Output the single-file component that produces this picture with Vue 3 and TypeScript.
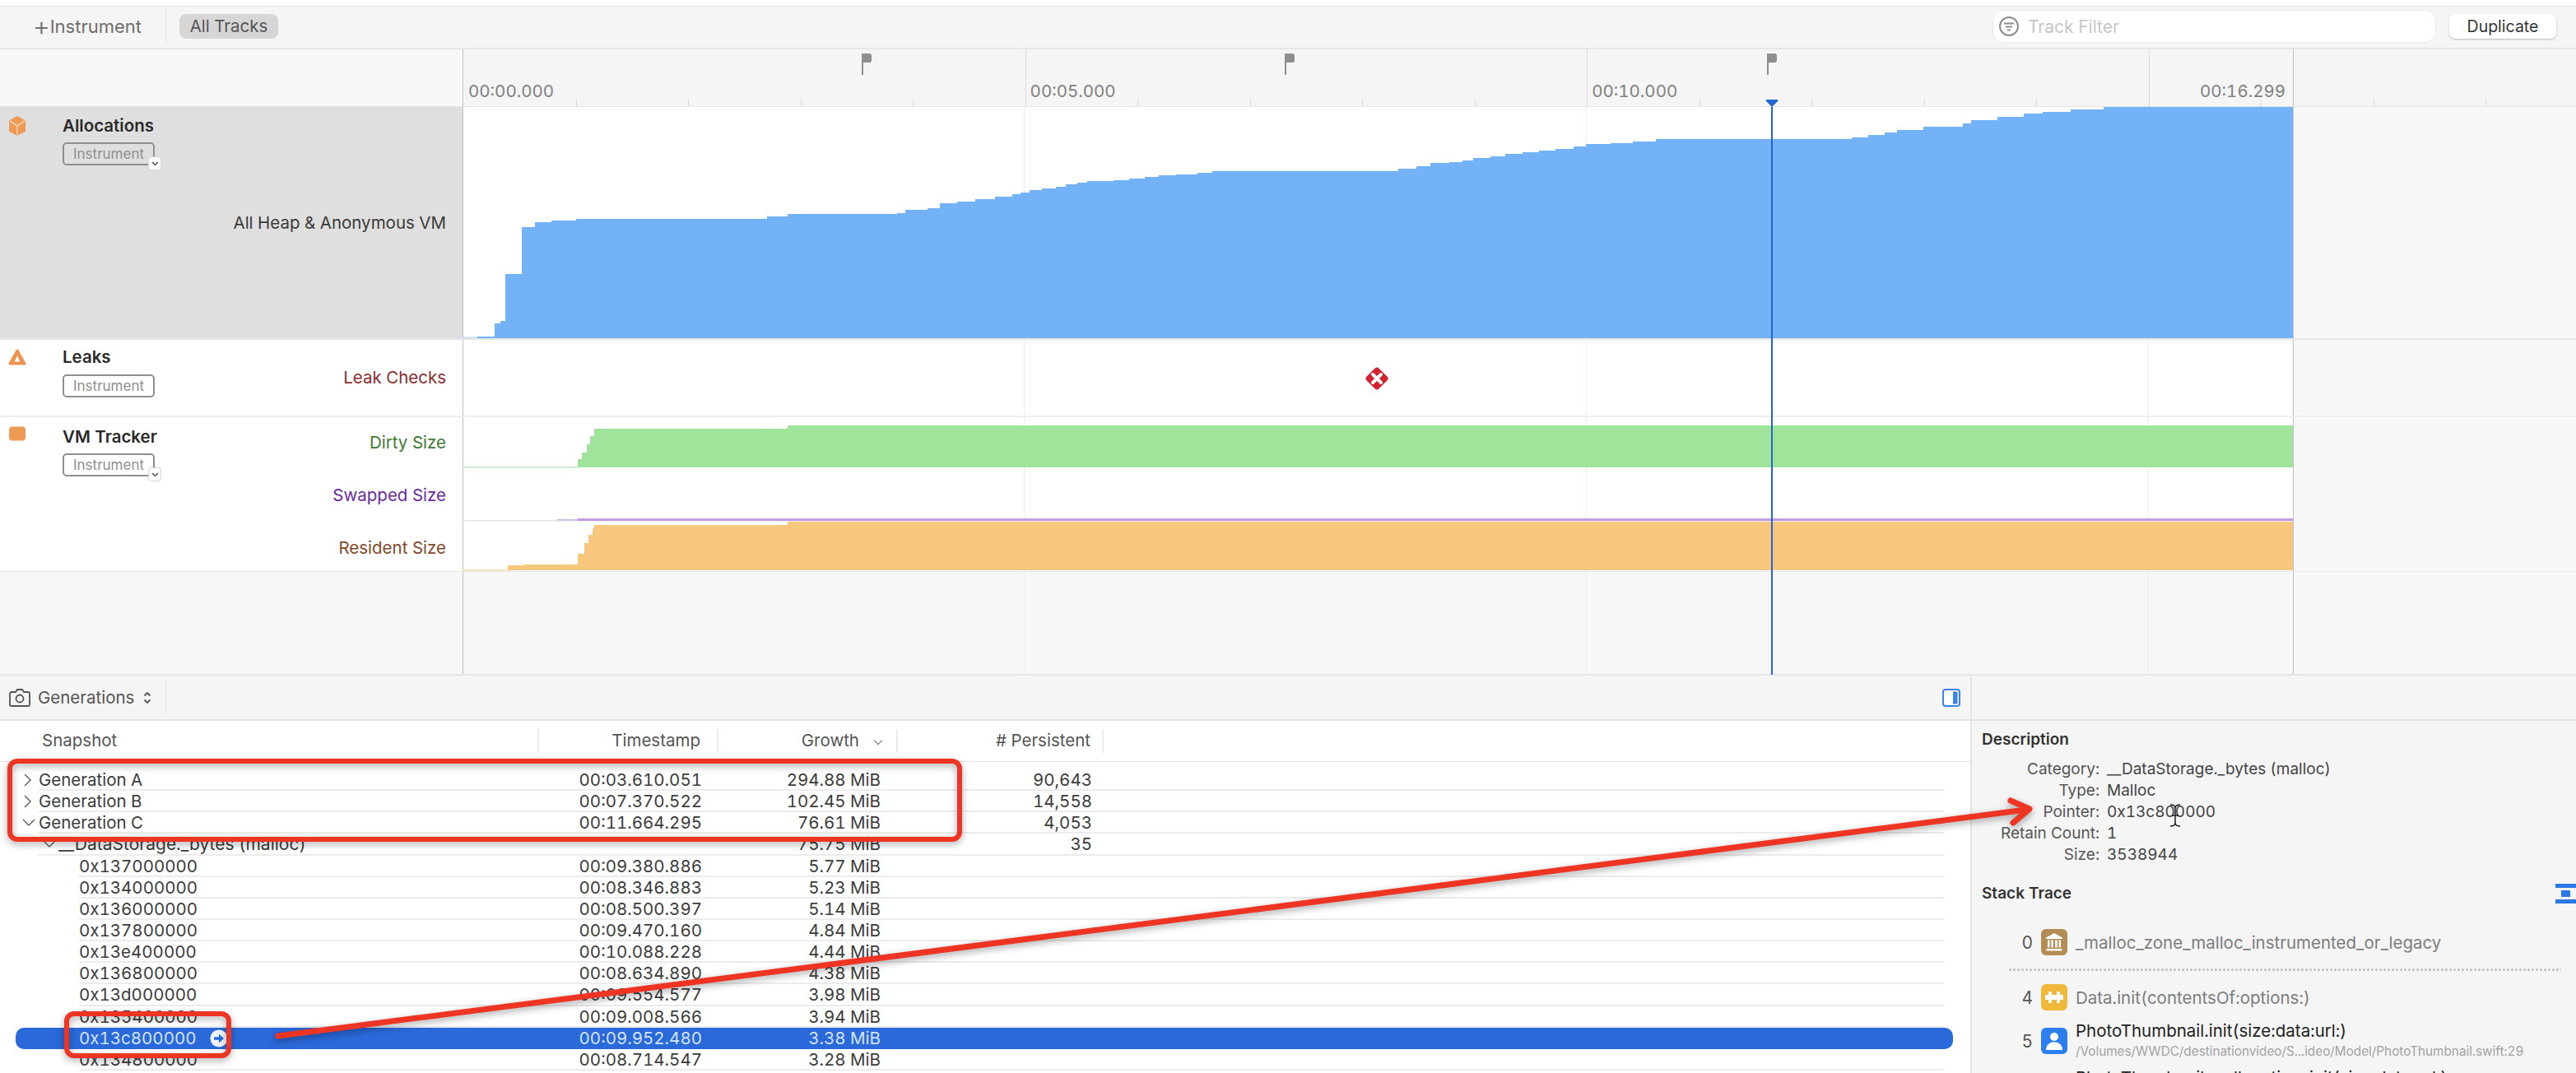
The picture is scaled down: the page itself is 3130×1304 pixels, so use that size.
<script setup lang="ts">
import { computed } from 'vue'

type Point = [number, number]

interface SnapshotRow {
  name: string
  level: 0 | 1 | 2
  open?: boolean
  time?: string
  growth: string
  persistent?: string
  selected?: boolean
}

const plotLeft = 562
const plotRight = 2786
const majorStep = 682.6
const minorStep = majorStep / 5

const majorX = [1, 2, 3].map((n) => plotLeft + n * majorStep)
const minorX = computed(() => {
  const xs: number[] = []
  for (let i = 1; i < 19; i++) {
    if (i % 5 !== 0) xs.push(plotLeft + i * minorStep)
  }
  return xs
})

const rulerLabels = [
  { text: '00:00.000', left: plotLeft + 6 },
  { text: '00:05.000', left: plotLeft + majorStep + 6 },
  { text: '00:10.000', left: plotLeft + 2 * majorStep + 6 },
  { text: '00:16.299', left: 2672 },
]
const flags = [1046, 1560, 2146]

// traced from the recording, x and y are page pixels
const heapSteps: Point[] = [
  [580, 409], [601, 393], [608, 390], [614, 333], [634, 276], [650, 270], [670, 268], [700, 266],
  [932, 263], [957, 260], [1090, 259], [1100, 255], [1127, 253], [1142, 247], [1163, 245], [1185, 242],
  [1209, 239], [1230, 236], [1240, 234], [1251, 231], [1266, 229], [1283, 227], [1295, 224], [1309, 222],
  [1321, 220], [1353, 219], [1372, 217], [1391, 215], [1408, 213], [1429, 212], [1455, 210], [1473, 208],
  [1699, 205], [1721, 202], [1738, 198], [1761, 197], [1777, 195], [1790, 192], [1811, 190], [1829, 187],
  [1850, 185], [1870, 183], [1890, 181], [1912, 178], [1927, 175], [1957, 174], [1984, 172], [2012, 169],
  [2250, 167], [2270, 164], [2290, 161], [2305, 158], [2337, 154], [2385, 150], [2395, 146], [2427, 142],
  [2459, 138], [2482, 136], [2516, 133], [2556, 130],
]
const dirtySteps: Point[] = [
  [702, 558], [707, 550], [713, 540], [717, 530], [722, 521], [957, 517],
]
const residentSteps: Point[] = [
  [617, 687], [637, 686], [702, 673], [710, 660], [715, 650], [720, 642], [722, 638], [957, 634],
]

function stepPath(points: Point[], base: number) {
  let d = `M${points[0][0]} ${base}`
  for (const [x, y] of points) d += `H${x}V${y}`
  return `${d}H${plotRight}V${base}Z`
}

const heapPath = stepPath(heapSteps, 411)
const dirtyPath = stepPath(dirtySteps, 568)
const residentPath = stepPath(residentSteps, 693)

const rows: SnapshotRow[] = [
  { name: 'Generation A', level: 0, time: '00:03.610.051', growth: '294.88 MiB', persistent: '90,643' },
  { name: 'Generation B', level: 0, time: '00:07.370.522', growth: '102.45 MiB', persistent: '14,558' },
  { name: 'Generation C', level: 0, open: true, time: '00:11.664.295', growth: '76.61 MiB', persistent: '4,053' },
  { name: '__DataStorage._bytes (malloc)', level: 1, open: true, growth: '75.75 MiB', persistent: '35' },
  { name: '0x137000000', level: 2, time: '00:09.380.886', growth: '5.77 MiB' },
  { name: '0x134000000', level: 2, time: '00:08.346.883', growth: '5.23 MiB' },
  { name: '0x136000000', level: 2, time: '00:08.500.397', growth: '5.14 MiB' },
  { name: '0x137800000', level: 2, time: '00:09.470.160', growth: '4.84 MiB' },
  { name: '0x13e400000', level: 2, time: '00:10.088.228', growth: '4.44 MiB' },
  { name: '0x136800000', level: 2, time: '00:08.634.890', growth: '4.38 MiB' },
  { name: '0x13d000000', level: 2, time: '00:09.554.577', growth: '3.98 MiB' },
  { name: '0x135400000', level: 2, time: '00:09.008.566', growth: '3.94 MiB' },
  { name: '0x13c800000', level: 2, time: '00:09.952.480', growth: '3.38 MiB', selected: true },
  { name: '0x134800000', level: 2, time: '00:08.714.547', growth: '3.28 MiB' },
]

const description = [
  ['Category:', '__DataStorage._bytes (malloc)'],
  ['Type:', 'Malloc'],
  ['Pointer:', '0x13c800000'],
  ['Retain Count:', '1'],
  ['Size:', '3538944'],
]
</script>

<template>
  <div class="page">
    <div class="strip"></div>

    <header class="toolbar">
      <span class="add"><span class="plus">+</span>Instrument</span>
      <span class="divider"></span>
      <span class="pill">All Tracks</span>
      <span class="spacer"></span>
      <div class="filter">
        <svg class="filter-icon" width="26" height="26" viewBox="0 0 26 26">
          <circle cx="13" cy="13" r="11" fill="none" stroke="#8d8d8d" stroke-width="2" />
          <path d="M7 9.500h12M9 13.500h8M11 17.500h4" stroke="#8d8d8d" stroke-width="2" />
        </svg>
        <span>Track Filter</span>
      </div>
      <button class="duplicate">Duplicate</button>
    </header>

    <section class="timeline">
      <div class="ruler-row">
        <div class="head-blank"></div>
        <div class="ruler">
          <i v-for="x in majorX" :key="x" class="major" :style="{ left: x - plotLeft + 'px' }"></i>
          <i v-for="x in minorX" :key="x" class="minor" :style="{ left: x - plotLeft + 'px' }"></i>
          <i class="major end"></i>
          <span v-for="l in rulerLabels" :key="l.text" class="ruler-label" :style="{ left: l.left - plotLeft + 'px' }">{{ l.text }}</span>
          <svg v-for="x in flags" :key="x" class="flag" :style="{ left: x - plotLeft - 2 + 'px' }" width="16" height="28" viewBox="0 0 16 28">
            <path d="M2 1h9.500c1.500 0 2.500 1 2.500 2.500v6c0 1.500-1 2.500-2.500 2.500H4v15H2z" fill="#8f8f8f" />
          </svg>
        </div>
      </div>

      <div class="track track-alloc">
        <div class="head head-active">
          <svg class="tool-icon" width="22" height="24" viewBox="0 0 22 24">
            <path d="M11 0l10 5.500v13L11 24 1 18.500v-13z" fill="#ee9a55" />
            <path d="M2 6l9 6 9-6M11 12v11" stroke="#f9d3b0" stroke-width="1.600" fill="none" />
          </svg>
          <div class="tool">
            <span class="tool-name">Allocations</span>
            <span class="badge">Instrument<span class="badge-more"><svg width="9" height="6" viewBox="0 0 9 6"><path d="M1 1l3.500 3.500L8 1" stroke="#555" stroke-width="1.500" fill="none" /></svg></span></span>
          </div>
          <div class="labels labels-center">
            <span class="label">All Heap &amp; Anonymous VM</span>
          </div>
        </div>
        <div class="plot">
          <svg class="lane" width="2224" height="281" viewBox="562 130 2224 281">
            <line v-for="x in majorX" :key="x" :x1="x" :x2="x" y1="130" y2="411" stroke="#ececec" stroke-width="1" />
            <rect x="562" y="409.500" width="30" height="1.500" fill="#bcdcfb" />
            <path :d="heapPath" fill="#74b2f8" />
          </svg>
          <div class="plot-rest"></div>
        </div>
      </div>

      <div class="track track-leaks">
        <div class="head">
          <svg class="tool-icon" width="22" height="20" viewBox="0 0 22 20">
            <path d="M11 2L20 18H2z" fill="#ec9350" stroke="#ec9350" stroke-width="3" stroke-linejoin="round" />
            <path d="M11 8.500l3.400 7H7.600z" fill="#fff" />
          </svg>
          <div class="tool">
            <span class="tool-name">Leaks</span>
            <span class="badge">Instrument</span>
          </div>
          <div class="labels labels-center leak-label">
            <span class="label" style="color: #8c2b30">Leak Checks</span>
          </div>
        </div>
        <div class="plot">
          <svg class="lane" width="2224" height="92" viewBox="562 413 2224 92">
            <line v-for="x in majorX" :key="x" :x1="x" :x2="x" y1="413" y2="505" stroke="#ececec" stroke-width="1" />
            <rect x="1662.500" y="449.500" width="21" height="21" rx="3.500" transform="rotate(45 1673 460)" fill="#d3212f" />
            <path d="M1668 455l10 10M1678 455l-10 10" stroke="#fff" stroke-width="4" stroke-linecap="round" />
          </svg>
          <div class="plot-rest"></div>
        </div>
      </div>

      <div class="track track-vm">
        <div class="head">
          <svg class="tool-icon" width="22" height="18" viewBox="0 0 22 18">
            <rect x="1" y="0.500" width="20" height="17" rx="4" fill="#ee9a55" />
          </svg>
          <div class="tool">
            <span class="tool-name">VM Tracker</span>
            <span class="badge">Instrument<span class="badge-more light"><svg width="9" height="6" viewBox="0 0 9 6"><path d="M1 1l3.500 3.500L8 1" stroke="#555" stroke-width="1.500" fill="none" /></svg></span></span>
          </div>
          <div class="labels labels-stack">
            <span class="label" style="color: #3f7a35">Dirty Size</span>
            <span class="label" style="color: #6a2d9c">Swapped Size</span>
            <span class="label" style="color: #84492a">Resident Size</span>
          </div>
        </div>
        <div class="plot">
          <svg class="lane" width="2224" height="187" viewBox="562 507 2224 187">
            <line v-for="x in majorX" :key="x" :x1="x" :x2="x" y1="507" y2="694" stroke="#ececec" stroke-width="1" />
            <rect x="562" y="567" width="140" height="1.500" fill="#bfe6bd" />
            <path :d="dirtyPath" fill="#a0e49c" />
            <rect x="562" y="632" width="2224" height="1.500" fill="#e3e3e3" />
            <rect x="677" y="631" width="25" height="1.500" fill="#cdb7e2" />
            <rect x="702" y="630" width="2084" height="3" fill="#c39be0" />
            <rect x="562" y="692" width="60" height="1.500" fill="#f6dcaf" />
            <path :d="residentPath" fill="#f6c77c" />
          </svg>
          <div class="plot-rest"></div>
        </div>
      </div>

      <div class="track track-empty">
        <div class="head head-empty"></div>
        <div class="plot">
          <svg class="lane" width="2224" height="125" viewBox="562 695 2224 125">
            <line v-for="x in majorX" :key="x" :x1="x" :x2="x" y1="695" y2="820" stroke="#ececec" stroke-width="1" />
          </svg>
          <div class="plot-rest"></div>
        </div>
      </div>

      <div class="playhead">
        <svg width="14" height="9" viewBox="0 0 14 9"><path d="M0 0h14v2l-7 7-7-7z" fill="#2466d1" /></svg>
        <i></i>
      </div>
    </section>

    <section class="details">
      <div class="main">
        <div class="bar">
          <svg class="camera" width="26" height="22" viewBox="0 0 26 22">
            <path d="M3 4h5l2-3h6l2 3h5c1.100 0 2 .9 2 2v13c0 1.100-.9 2-2 2H3c-1.100 0-2-.9-2-2V6c0-1.100.9-2 2-2z" fill="none" stroke="#555" stroke-width="1.800" />
            <circle cx="13" cy="12" r="4.500" fill="none" stroke="#555" stroke-width="1.800" />
          </svg>
          <span class="bar-title">Generations</span>
          <svg class="updown" width="10" height="16" viewBox="0 0 10 16">
            <path d="M1.500 5.500L5 2l3.500 3.500M1.500 10.500L5 14l3.500-3.500" fill="none" stroke="#555" stroke-width="1.800" />
          </svg>
          <span class="bar-divider"></span>
          <span class="spacer"></span>
          <svg class="panel-toggle" width="22" height="22" viewBox="0 0 22 22">
            <rect x="1" y="1" width="20" height="20" rx="3" fill="#fff" stroke="#3d82ea" stroke-width="2" />
            <rect x="13" y="3.500" width="5.500" height="15" fill="#3d82ea" />
          </svg>
        </div>

        <div class="table">
          <div class="thead">
            <div class="th th-name">Snapshot</div>
            <div class="th">Timestamp</div>
            <div class="th">Growth
              <svg class="sort" width="12" height="8" viewBox="0 0 12 8"><path d="M1 1.500l5 5 5-5" fill="none" stroke="#999" stroke-width="1.600" /></svg>
            </div>
            <div class="th th-count"># Persistent</div>
          </div>
          <div class="tbody">
            <div v-for="row in rows" :key="row.name" class="tr" :class="[`level-${row.level}`, { selected: row.selected }]">
              <div class="td-name">
                <svg v-if="row.level < 2 && !row.open" class="twist" width="14" height="18" viewBox="0 0 14 18"><path d="M3 2l7 7-7 7" fill="none" stroke="#666" stroke-width="1.500" /></svg>
                <svg v-else-if="row.level < 2" class="twist" width="16" height="12" viewBox="0 0 16 12"><path d="M1 2l7 7 7-7" fill="none" stroke="#666" stroke-width="1.500" /></svg>
                <span>{{ row.name }}</span>
                <svg v-if="row.selected" class="go" width="22" height="22" viewBox="0 0 22 22">
                  <circle cx="11" cy="11" r="10.500" fill="#eef4ff" />
                  <path d="M5 9.300h6V5.500l6 5.500-6 5.500v-3.800H5z" fill="#2a69da" />
                </svg>
              </div>
              <div class="td-num">{{ row.time }}</div>
              <div class="td-num">{{ row.growth }}</div>
              <div class="td-num">{{ row.persistent }}</div>
            </div>
          </div>
        </div>
      </div>

      <aside class="side">
        <div class="side-bar"></div>
        <div class="side-body">
          <div class="side-title">Description</div>
          <dl class="desc">
            <template v-for="d in description" :key="d[0]">
              <dt>{{ d[0] }}</dt>
              <dd>{{ d[1] }}</dd>
            </template>
          </dl>
          <div class="stack-head">
            <span class="side-title">Stack Trace</span>
            <svg width="25" height="24" viewBox="0 0 25 24">
              <path d="M0 0h25v5H0zM0 19h25v5H0zM7 8h11v8H7z" fill="#2e78e6" />
            </svg>
          </div>
          <div class="frame frame-first">
            <span class="frame-no">0</span>
            <svg class="frame-icon" width="32" height="32" viewBox="0 0 32 32">
              <rect width="32" height="32" rx="6" fill="#b38d55" />
              <path d="M16 5l10 5.500v1.500H6v-1.500zM8 13.500h2.500v9H8zM12.300 13.500h2.500v9h-2.500zM17.200 13.500h2.500v9h-2.500zM21.500 13.500H24v9h-2.500zM6.500 24h19v2.500h-19z" fill="#fff" />
            </svg>
            <span class="frame-text">_malloc_zone_malloc_instrumented_or_legacy</span>
          </div>
          <div class="dots"></div>
          <div class="frame">
            <span class="frame-no">4</span>
            <svg class="frame-icon" width="32" height="32" viewBox="0 0 32 32">
              <rect width="32" height="32" rx="6" fill="#f0b93a" />
              <path d="M5 13h4v-4h4v4h6v-4h4v4h4v6h-4v4h-4v-4h-6v4H9v-4H5z" fill="#fff" />
            </svg>
            <span class="frame-text">Data.init(contentsOf:options:)</span>
          </div>
          <div class="frame frame-own">
            <span class="frame-no">5</span>
            <svg class="frame-icon" width="32" height="32" viewBox="0 0 32 32">
              <rect width="32" height="32" rx="6" fill="#2d7ff0" />
              <circle cx="16" cy="11" r="5" fill="#fff" />
              <path d="M6 27c0-6 4-9.500 10-9.500S26 21 26 27z" fill="#fff" />
            </svg>
            <div class="frame-lines">
              <span class="frame-title">PhotoThumbnail.init(size:data:url:)</span>
              <span class="frame-path">/Volumes/WWDC/destinationvideo/S...ideo/Model/PhotoThumbnail.swift:29</span>
            </div>
          </div>
          <div class="frame frame-cut">
            <span class="frame-no"></span>
            <span class="frame-gap"></span>
            <span class="frame-title">PhotoThumbnail.__allocating_init(size:data:url:)</span>
          </div>
        </div>
      </aside>
    </section>

    <svg class="callouts" width="3130" height="1304" viewBox="0 0 3130 1304">
      <g fill="none" stroke="#ee3524" stroke-width="6" stroke-linejoin="round" stroke-linecap="round">
        <rect x="12" y="925" width="1154" height="95" rx="9" />
        <rect x="81" y="1232" width="197" height="51" rx="9" />
        <path d="M338 1259L2462 984" stroke-width="7" />
        <path d="M2443 973L2466 983L2446 1000" stroke-width="7" />
      </g>
    </svg>

    <svg class="ibeam" width="14" height="28" viewBox="0 0 14 28">
      <path d="M1 1c3 0 6 1 6 4v18c0 3-3 4-6 4M13 1c-3 0-6 1-6 4v18c0 3 3 4 6 4M3 14h8" fill="none" stroke="#1c1c1c" stroke-width="1.500" />
    </svg>
  </div>
</template>

<style scoped>
.page {
  position: relative;
  width: 3130px;
  height: 1304px;
  overflow: hidden;
  display: flex;
  flex-direction: column;
  background: #f7f7f7;
  font-family: Inter, "Liberation Sans", sans-serif;
  font-size: 20.5px;
  font-variant-numeric: tabular-nums;
  color: #3a3a3a;
}
.strip {
  height: 8px;
  flex: none;
  background: #fdfdfd;
  border-bottom: 1px solid #e4e4e4;
  box-sizing: border-box;
}

.toolbar {
  height: 52px;
  flex: none;
  box-sizing: border-box;
  display: flex;
  align-items: center;
  padding: 0 24px 2px 40px;
  background: #f5f5f5;
  border-bottom: 2px solid #e6e6e6;
}
.add {
  width: 136px;
  color: #6e6e6e;
  white-space: nowrap;
  font-size: 22px;
}
.plus {
  font-size: 32px;
  line-height: 20px;
  font-weight: 300;
  vertical-align: -3px;
}
.divider {
  width: 1px;
  height: 40px;
  margin: 0 16px 0 25px;
  background: #e0e0e0;
}
.pill {
  width: 120px;
  height: 30px;
  line-height: 30px;
  text-align: center;
  background: #d6d6d6;
  border-radius: 8px;
  color: #555;
  font-size: 20.5px;
}
.spacer {
  flex: 1;
}
.filter {
  width: 539px;
  height: 40px;
  box-sizing: border-box;
  padding-left: 6px;
  display: flex;
  align-items: center;
  gap: 10px;
  background: #fff;
  border: 1px solid #ebebeb;
  border-radius: 13px;
  color: #c6c6c6;
  font-size: 21px;
}
.filter-icon {
  flex: none;
}
.duplicate {
  width: 130px;
  height: 30px;
  margin-left: 16px;
  padding: 0;
  border: none;
  border-radius: 7px;
  background: #fff;
  box-shadow: 0 1px 2px rgba(0, 0, 0, 0.25);
  color: #333;
  font: inherit;
  font-size: 19.500px;
}

.timeline {
  position: relative;
  flex: none;
}
.ruler-row {
  height: 70px;
  display: flex;
  box-sizing: border-box;
  border-bottom: 1px solid #e4e4e4;
}
.head-blank {
  width: 562px;
  flex: none;
  background: #f8f8f8;
}
.ruler {
  position: relative;
  flex: 1;
  background: #f5f5f5;
  border-left: 1px solid #c0c0c0;
  box-sizing: border-box;
}
.major,
.minor {
  position: absolute;
  bottom: 0;
  width: 1px;
  background: #dcdcdc;
}
.major {
  top: 0;
}
.major.end {
  left: 2223px;
  background: #c0c0c0;
}
.minor {
  height: 9px;
}
.ruler-label {
  position: absolute;
  top: 39px;
  color: #808080;
  font-size: 20.500px;
  line-height: 24px;
}
.flag {
  position: absolute;
  top: 4px;
}

.track {
  display: flex;
  box-sizing: border-box;
  background: #fff;
}
.track-alloc {
  height: 283px;
  border-bottom: 2px solid #e6e6e6;
}
.track-leaks {
  height: 94px;
  border-bottom: 2px solid #eeeeee;
}
.track-vm {
  height: 188px;
  border-bottom: 1px solid #e6e6e6;
}
.track-empty {
  height: 126px;
  border-bottom: 2px solid #e6e6e6;
  background: #f7f7f7;
}
.head {
  width: 562px;
  flex: none;
  box-sizing: border-box;
  display: flex;
  padding-right: 20px;
}
.head-active {
  background: #dfdfdf;
}
.tool-icon {
  flex: none;
  margin: 11px 0 0 10px;
}
.tool {
  width: 160px;
  flex: none;
  margin-left: 44px;
  padding-top: 10px;
  display: flex;
  flex-direction: column;
  align-items: flex-start;
}
.track-leaks .tool {
  padding-top: 8px;
}
.track-leaks .badge {
  margin-top: 8px;
}
.track-vm .tool {
  padding-top: 11px;
}
.tool-name {
  font-size: 20.500px;
  font-weight: 600;
  line-height: 26px;
  color: #2a2a2a;
}
.badge {
  position: relative;
  width: 112px;
  height: 28px;
  margin-top: 7px;
  box-sizing: border-box;
  border: 2px solid #8f8f8f;
  border-radius: 5px;
  text-align: center;
  line-height: 24px;
  font-size: 17px;
  color: #8f8f8f;
}
.badge-more {
  position: absolute;
  right: -10px;
  bottom: -8px;
  width: 14px;
  height: 15px;
  display: flex;
  align-items: center;
  justify-content: center;
  background: #fff;
  border: 1px solid #d5d5d5;
  border-radius: 4px;
}
.labels {
  flex: 1;
  display: flex;
  flex-direction: column;
  align-items: flex-end;
}
.labels-center {
  justify-content: center;
}
.labels-stack {
  justify-content: space-between;
  padding: 18px 0 15px;
}
.label {
  line-height: 26px;
  white-space: nowrap;
}

.plot {
  flex: 1;
  display: flex;
  min-width: 0;
  border-left: 1px solid #c0c0c0;
}
.lane {
  flex: none;
  display: block;
  margin-left: -1px;
}
.plot-rest {
  flex: 1;
  background: #f8f8f8;
  border-left: 1px solid #c0c0c0;
}

.playhead {
  position: absolute;
  left: 2146px;
  top: 61px;
  bottom: 1px;
  display: flex;
  flex-direction: column;
  align-items: center;
  width: 14px;
}
.playhead i {
  flex: 1;
  width: 2px;
  background: #2466d1;
}

.details {
  flex: 1;
  min-height: 0;
  display: flex;
}
.main {
  width: 2394px;
  flex: none;
  display: flex;
  flex-direction: column;
  background: #fff;
}
.bar {
  height: 55px;
  flex: none;
  box-sizing: border-box;
  padding-right: 12px;
  display: flex;
  align-items: center;
  background: #f5f5f5;
  border-bottom: 2px solid #e4e4e4;
}
.camera {
  margin-left: 11px;
}
.bar-title {
  margin-left: 9px;
  color: #555;
}
.updown {
  margin-left: 11px;
}
.bar-divider {
  width: 1px;
  height: 38px;
  margin-left: 17px;
  background: #e3e3e3;
}
.table {
  flex: 1;
  min-height: 0;
}
.thead {
  display: grid;
  grid-template-columns: 655px 218px 218px 250px;
  height: 50px;
  box-sizing: border-box;
  padding-top: 10px;
  border-bottom: 1px solid #e6e6e6;
}
.th {
  height: 29px;
  line-height: 28px;
  box-sizing: border-box;
  padding-right: 20px;
  text-align: right;
  border-right: 2px solid #ececec;
  color: #555;
}
.th-name {
  text-align: left;
  padding-left: 51px;
}
.th:nth-child(3) {
  padding-right: 45px;
  position: relative;
}
.th-count {
  padding-right: 14px;
}
.sort {
  position: absolute;
  right: 16px;
  top: 12px;
}
.tbody {
  padding-top: 9px;
}
.tr {
  position: relative;
  display: grid;
  grid-template-columns: 655px 198px 217px 257px;
  height: 26.150px;
  line-height: 26px;
  color: #3c3c3c;
}
.tr::after {
  content: "";
  position: absolute;
  right: 32px;
  bottom: 0;
  height: 2px;
  background: #ececec;
}
.level-0::after {
  left: 47px;
}
.level-1::after {
  left: 47px;
}
.level-2::after {
  left: 96px;
}
.td-name {
  display: flex;
  align-items: center;
  white-space: nowrap;
}
.level-0 .td-name {
  padding-left: 47px;
}
.level-1 .td-name {
  padding-left: 71px;
}
.level-2 .td-name {
  padding-left: 96px;
}
.level-1 .td-name span {
  font-size: 21px;
}
.twist {
  flex: none;
  position: absolute;
}
.level-0 .twist {
  left: 27px;
}
.level-1 .twist {
  left: 52px;
}
.td-num {
  text-align: right;
  white-space: nowrap;
}
.selected {
  color: #d4e3ff;
}
.selected::before {
  content: "";
  position: absolute;
  left: 19px;
  right: 21px;
  top: 0;
  bottom: 0;
  border-radius: 10px;
  background: #2a69da;
}
.selected::after {
  display: none;
}
.selected > div {
  position: relative;
}
.go {
  margin-left: 16px;
}

.side {
  flex: 1;
  min-width: 0;
  box-sizing: border-box;
  border-left: 2px solid #e4e4e4;
  background: #f5f5f5;
}
.side-bar {
  height: 55px;
  box-sizing: border-box;
  border-bottom: 2px solid #e4e4e4;
}
.side-body {
  padding: 10px 0 0 12px;
}
.side-title {
  display: block;
  font-size: 19px;
  font-weight: 600;
  line-height: 26px;
  color: #333;
}
.desc {
  display: grid;
  grid-template-columns: 143px 1fr;
  column-gap: 9px;
  margin: 10px 0 0;
  font-size: 19px;
  line-height: 26px;
}
.desc dt {
  text-align: right;
  white-space: nowrap;
  color: #555;
}
.desc dd {
  margin: 0;
  color: #444;
  white-space: nowrap;
}
.stack-head {
  display: flex;
  justify-content: space-between;
  align-items: center;
  margin-top: 21px;
}
.frame {
  display: flex;
  align-items: center;
  min-height: 32px;
}
.frame-first {
  margin-top: 30px;
}
.frame-no {
  width: 62px;
  flex: none;
  text-align: right;
  font-size: 21px;
  color: #555;
}
.frame-icon {
  flex: none;
  margin-left: 10px;
}
.frame-text {
  margin-left: 10px;
  color: #7d7d7d;
  white-space: nowrap;
}
.dots {
  height: 3px;
  margin: 16px 18px 16px 32px;
  background: radial-gradient(circle, #bdbdbd 1.300px, transparent 1.500px) 0 0 / 5px 3px repeat-x;
}
.frame-own {
  margin-top: 12px;
}
.frame-lines {
  margin-left: 10px;
  display: flex;
  flex-direction: column;
}
.frame-title {
  line-height: 26px;
  color: #222;
  white-space: nowrap;
}
.frame-path {
  line-height: 24px;
  font-size: 15.300px;
  color: #a2a2a2;
  white-space: nowrap;
}
.frame-cut {
  margin-top: 4px;
}
.frame-gap {
  width: 42px;
  flex: none;
  margin-left: 10px;
}

.callouts {
  position: absolute;
  left: 0;
  top: 0;
  pointer-events: none;
  filter: drop-shadow(0 3px 4px rgba(0, 0, 0, 0.35));
}
.ibeam {
  position: absolute;
  left: 2636px;
  top: 977px;
}
</style>
